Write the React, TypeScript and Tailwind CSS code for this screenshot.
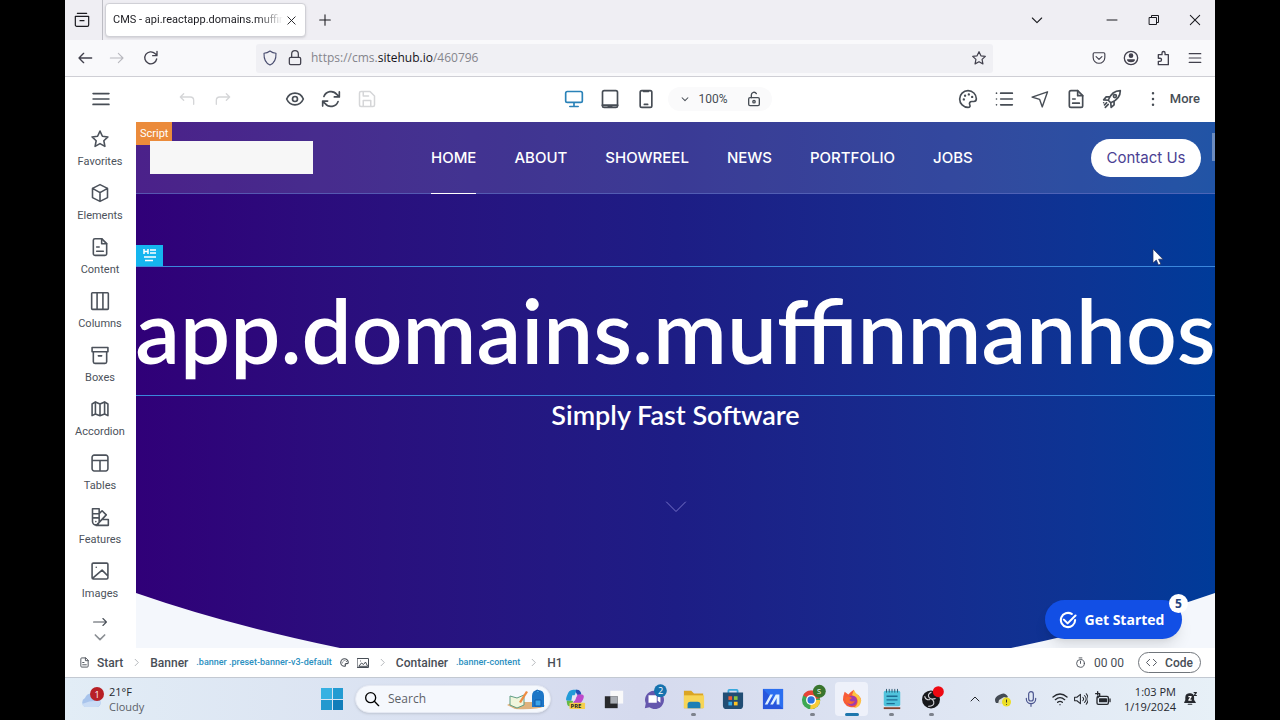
import type { ReactNode } from 'react';

type IconProps = { children: ReactNode; className?: string; width?: number };

function Icon({ children, className = 'size-5', width = 2 }: IconProps) {
  return (
    <svg viewBox="0 0 24 24" fill="none" stroke="currentColor" strokeWidth={width} strokeLinecap="round" strokeLinejoin="round" className={`shrink-0 ${className}`} aria-hidden="true">
      {children}
    </svg>
  );
}

function IconButton({ label, children, className = 'w-8' }: { label: string; children: ReactNode; className?: string }) {
  return (
    <button type="button" aria-label={label} className={`flex h-8 shrink-0 items-center justify-center ${className}`}>
      {children}
    </button>
  );
}

const starPath = <path d="M12 2.500l2.900 6.200 6.600.8-4.900 4.600 1.300 6.700-5.900-3.300-5.900 3.300 1.300-6.700L2.500 9.500l6.600-.8z" />;
const docPath = (
  <>
    <path d="M14 2H6a2 2 0 0 0-2 2v16a2 2 0 0 0 2 2h12a2 2 0 0 0 2-2V8z" />
    <path d="M14 2v6h6M8 12h3M8 17h8" />
  </>
);
const palettePath = (
  <>
    <path d="M12 2a10 10 0 1 0 0 20c2.400 0 2.900-1.500 2.100-3.100-.9-1.900.2-3.900 2.400-3.900H19c2 0 3-1.200 3-3.200C22 6.200 17.500 2 12 2z" />
    <path d="M7 12.500v.01M8.500 8v.01M13 6.500v.01M17 9.500v.01" strokeWidth="2.800" />
  </>
);
const chevronDown = <path d="M5 9l7 7 7-7" />;

function TabBar() {
  return (
    <div className="flex h-10 shrink-0 items-center bg-[#efeef3] text-[#1b1b20]">
      <div className="flex h-full w-[38px] items-center justify-center border-r border-[#bdbdc4] pr-1">
        <IconButton label="Recent browsing">
          <Icon className="size-4" width={1.800}><path d="M5 2h14M2 6.500h20v13a2 2 0 0 1-2 2H4a2 2 0 0 1-2-2zM9 13h6" /></Icon>
        </IconButton>
      </div>
      <div className="ml-[2px] flex h-[34px] w-[201px] items-center rounded-[4px] border border-[#d0d0d6] bg-white pr-[6px] pl-[7px] shadow-sm">
        <span className="min-w-0 flex-1 font-[Roboto,sans-serif] text-[11px] whitespace-nowrap [mask-image:linear-gradient(to_right,black_85%,transparent)]">CMS - api.reactapp.domains.muffin</span>
        <IconButton label="Close tab" className="w-4"><Icon className="size-[11px]"><path d="M4 4l16 16M20 4L4 20" /></Icon></IconButton>
      </div>
      <IconButton label="New tab" className="ml-[3px] w-8"><Icon className="size-4" width={1.600}><path d="M12 4v16M4 12h16" /></Icon></IconButton>
      <IconButton label="List all tabs" className="mr-[34px] ml-auto w-10"><Icon className="size-4" width={1.600}>{chevronDown}</Icon></IconButton>
      <IconButton label="Minimize" className="w-[42px]"><Icon className="size-3"><path d="M2 12h20" /></Icon></IconButton>
      <IconButton label="Restore" className="w-[42px]"><Icon className="size-3"><path d="M3 7h14v14H3zM7 7V3h14v14h-4" /></Icon></IconButton>
      <IconButton label="Close window" className="w-[40px]"><Icon className="size-[14px]" width={1.800}><path d="M4 4l16 16M20 4L4 20" /></Icon></IconButton>
    </div>
  );
}

function AddressBar() {
  return (
    <div className="flex h-[37px] shrink-0 items-center border-b border-[#cfcfd5] bg-[#f9f9fb] px-1 text-[#42414d]">
      <IconButton label="Back"><Icon className="size-4"><path d="M22 12H3M10 5l-7 7 7 7" /></Icon></IconButton>
      <IconButton label="Forward"><Icon className="size-4 text-[#b8b8be]" width={1.600}><path d="M2 12h19M14 5l7 7-7 7" /></Icon></IconButton>
      <IconButton label="Reload" className="w-9"><Icon className="size-4"><path d="M20.500 13.500A9 9 0 1 1 18 5.300L21 8M21 2v6.500h-6.500" /></Icon></IconButton>
      <div className="mr-[90px] ml-[87px] flex h-[29px] min-w-0 flex-1 items-center rounded-[3px] bg-[#f0f0f4] pr-1 pl-[6px]">
        <Icon className="size-4 text-[#4a4e70]" width={1.700}><path d="M12 1.500c3 2.300 6 3.200 9 3.300C21.300 13 19 19.500 12 22.500 5 19.500 2.700 13 3 4.800c3-.1 6-1 9-3.300z" /></Icon>
        <Icon className="ml-[9px] size-4" width={1.900}><path d="M5.500 11h13a2 2 0 0 1 2 2v7a2 2 0 0 1-2 2h-13a2 2 0 0 1-2-2v-7a2 2 0 0 1 2-2zM7 11V6a5 5 0 0 1 10 0v5" /></Icon>
        <a href="https://cms.sitehub.io/460796" className="ml-2 flex-1 font-['Open_Sans',sans-serif] text-[12px] text-[#85858c]">
          https://cms.<span className="text-[#15141a]">sitehub.io</span>/460796
        </a>
        <IconButton label="Bookmark" className="w-5"><Icon className="size-4" width={1.800}>{starPath}</Icon></IconButton>
      </div>
      <IconButton label="Save to Pocket"><Icon className="size-[14px]"><path d="M4 3h16a2 2 0 0 1 2 2v6a10 10 0 0 1-20 0V5a2 2 0 0 1 2-2zM7 9.500l5 5 5-5" /></Icon></IconButton>
      <IconButton label="Account"><Icon className="size-4"><circle cx="12" cy="12" r="10" /><circle cx="12" cy="8.500" r="2.500" fill="currentColor" /><path d="M7 15h10c-1 3-9 3-10 0z" fill="currentColor" /></Icon></IconButton>
      <IconButton label="Extensions"><Icon className="size-4"><path d="M8 7h2.500V4.500a2.300 2.300 0 0 1 4.600 0V7H20v15H5v-5h2.500a2.300 2.300 0 0 0 0-4.600H5V7h3" /></Icon></IconButton>
      <IconButton label="Application menu"><Icon className="size-[14px]" width={1.800}><path d="M2 4.500h20M2 12h20M2 19.500h20" /></Icon></IconButton>
    </div>
  );
}

function CmsToolbar() {
  return (
    <div className="flex h-[45px] shrink-0 items-center justify-between bg-white pb-[2px] text-[#474d55]">
      <div className="flex items-center pl-[18px]">
        <IconButton label="Menu" className="mr-[50px] w-9"><Icon><path d="M2.500 5.500h19M2.500 12h19M2.500 18.500h19" /></Icon></IconButton>
        <IconButton label="Undo" className="w-9 text-[#d5d6d8]"><Icon className="size-4"><path d="M7 4L2 9l5 5M2 9h15a5 5 0 0 1 5 5v6" /></Icon></IconButton>
        <IconButton label="Redo" className="mr-9 w-9 text-[#d5d6d8]"><Icon className="size-4"><path d="M17 4l5 5-5 5M22 9H7a5 5 0 0 0-5 5v6" /></Icon></IconButton>
        <IconButton label="Preview" className="w-9"><Icon className="size-5"><path d="M2 12c2-4.500 5.700-7 10-7s8 2.500 10 7c-2 4.500-5.700 7-10 7s-8-2.500-10-7z" /><circle cx="12" cy="12" r="3" /></Icon></IconButton>
        <IconButton label="Refresh" className="w-9"><Icon className="size-5"><path d="M3.500 9A9 9 0 0 1 19 6.500L21.500 9M22 3.500V9.500h-6M20.500 15A9 9 0 0 1 5 17.500L2.500 15M2 20.500v-6h6" /></Icon></IconButton>
        <IconButton label="Save" className="w-9 text-[#d5d6d8]"><Icon className="size-[18px]"><path d="M4 2h12l6 6v12a2 2 0 0 1-2 2H4a2 2 0 0 1-2-2V4a2 2 0 0 1 2-2zM7 2v6h7M7 22v-8h10v8" /></Icon></IconButton>
      </div>
      <div className="mr-[6px] flex items-center">
        <IconButton label="Desktop" className="w-9 text-[#2a82b8]"><Icon><path d="M4 3h16a2 2 0 0 1 2 2v9a2 2 0 0 1-2 2H4a2 2 0 0 1-2-2V5a2 2 0 0 1 2-2zM12 16v5M7 21h10" /></Icon></IconButton>
        <IconButton label="Tablet" className="w-9"><Icon><rect x="3" y="2" width="18" height="20" rx="2" /><path d="M3 19.500h18M10 20.500h4" strokeWidth="2.500" /></Icon></IconButton>
        <IconButton label="Phone" className="w-9"><Icon><rect x="5" y="2" width="14" height="20" rx="2" /><path d="M9 3h6M10 18.500h4" /></Icon></IconButton>
        <div className="ml-1 flex h-6 w-[104px] items-center rounded-xl bg-[#fafafb]">
          <button type="button" className="flex items-center gap-2 pl-3 font-[Roboto,sans-serif] text-[12px]">
            <Icon className="size-[10px]" width={2.500}>{chevronDown}</Icon>100%
          </button>
          <IconButton label="Unlock zoom" className="ml-auto w-9"><Icon className="size-4"><rect x="4" y="10" width="16" height="12" rx="2" /><path d="M8 10V6a4 4 0 0 1 7.500-2" /><circle cx="12" cy="16" r="1.800" /></Icon></IconButton>
        </div>
      </div>
      <div className="flex items-center pr-[15px]">
        <IconButton label="Design" className="w-9"><Icon>{palettePath}</Icon></IconButton>
        <IconButton label="Structure" className="w-9"><Icon><path d="M8 5h14M8 12h14M8 19h14M3 5h.01M3 12h.01M3 19h.01" /></Icon></IconButton>
        <IconButton label="Navigate" className="w-9"><Icon className="size-[18px]"><path d="M22 2.500L1.500 9.500l10 3 3.500 10z" /></Icon></IconButton>
        <IconButton label="Pages" className="w-9"><Icon>{docPath}</Icon></IconButton>
        <IconButton label="Publish" className="w-9"><Icon><path d="M7.500 13.500C10 7 14.500 2 22 2c0 7.500-5 12-11.500 14.500zM9.500 9.500H5L2 13l5.500.5M14.500 14.500V19L11 22l-.5-5.500" /><circle cx="15.500" cy="8.500" r="1.800" /><path d="M5.500 16.500L3 19M7.500 18.500L4 22M2 16.500v.01" /></Icon></IconButton>
        <button type="button" className="ml-[13px] flex h-8 items-center gap-[7px] font-[Roboto,sans-serif] text-[13px] font-medium">
          <Icon width={3}><path d="M12 5v.01M12 12v.01M12 19v.01" /></Icon>More
        </button>
      </div>
    </div>
  );
}

const tools: { label: string; icon: ReactNode }[] = [
  { label: 'Favorites', icon: starPath },
  { label: 'Elements', icon: <path d="M12 2l9 4.500v11L12 22l-9-4.500v-11zM3 6.500l9 5 9-5M12 11.500V22" /> },
  { label: 'Content', icon: docPath },
  { label: 'Columns', icon: <path d="M3 2h18a1 1 0 0 1 1 1v18a1 1 0 0 1-1 1H3a1 1 0 0 1-1-1V3a1 1 0 0 1 1-1zM8.500 2v20M15.500 2v20" /> },
  { label: 'Boxes', icon: <path d="M2.500 3h19v5h-19zM4 8v12a2 2 0 0 0 2 2h12a2 2 0 0 0 2-2V8M10 13h4" /> },
  { label: 'Accordion', icon: <path d="M2.500 6l4-2.500 5.500 2.500 5.500-2.500 4 2.500v14l-4-2-5.500 2-5.500-2-4 2zM6.500 3.500V18M12 6v14M17.500 3.500V18" /> },
  { label: 'Tables', icon: <path d="M5 2.500h14a2.500 2.500 0 0 1 2.500 2.500v14a2.500 2.500 0 0 1-2.500 2.500H5A2.500 2.500 0 0 1 2.500 19V5A2.500 2.500 0 0 1 5 2.500zM2.500 9h19M12 9v12.500" /> },
  { label: 'Features', icon: <path d="M3 2h8v15.500a4 4 0 0 1-8 0zM3 8h8M3 13h8M11 8l3.500-3.500 5 5L9 20.500M15 15h7v7H7M7 17.500v.01" /> },
  { label: 'Images', icon: <path d="M4 2.500h16A1.500 1.500 0 0 1 21.500 4v16a1.500 1.500 0 0 1-1.500 1.500H4A1.500 1.500 0 0 1 2.500 20V4A1.500 1.500 0 0 1 4 2.500zM4 20l10.500-9 7 7M7.500 7.500v.01" /> },
];

function Sidebar() {
  return (
    <nav aria-label="Blocks" className="flex w-[71px] shrink-0 flex-col items-center bg-white pt-[7px] pr-px text-[#4c525b]">
      {tools.map((tool) => (
        <button key={tool.label} type="button" className="flex h-[54px] w-full shrink-0 flex-col items-center gap-[5px] font-[Roboto,sans-serif] text-[11px] leading-4">
          <Icon className="size-5" width={1.900}>{tool.icon}</Icon>
          {tool.label}
        </button>
      ))}
      <Icon className="h-[14px] w-5"><path d="M1 12h22M17 6l6 6-6 6" /></Icon>
      <Icon className="size-4 text-[#8b8f94]" width={2.500}>{chevronDown}</Icon>
    </nav>
  );
}

const links = ['HOME', 'ABOUT', 'SHOWREEL', 'NEWS', 'PORTFOLIO', 'JOBS'];

function SiteCanvas() {
  return (
    <main className="relative flex min-w-0 flex-1 flex-col overflow-hidden bg-linear-to-r from-[#300078] via-[#1d1d85] to-[#003b99] text-white">
      <header className="flex h-[72px] shrink-0 items-center border-b border-[#5c6cc0]/70 bg-white/13 px-[14px]">
        <span className="absolute top-0 left-0 bg-[#eb8b3b] px-1 font-[Roboto,sans-serif] text-[11px] leading-[23px]">Script</span>
        <div className="relative h-[33px] w-[163px] shrink-0 bg-[#f7f7f7]" />
        <ul className="ml-[118px] flex h-full gap-[38px] font-[Inter,sans-serif] text-[15px] font-medium">
          {links.map((link) => (
            <li key={link} className={link === 'HOME' ? 'flex h-[72px] items-center border-y border-t-transparent border-b-white' : 'flex h-[72px] items-center'}>
              <a href="#top">{link}</a>
            </li>
          ))}
        </ul>
        <a href="#contact" className="ml-auto flex h-[38px] w-[110px] shrink-0 items-center justify-center rounded-full bg-white pt-px font-[Inter,sans-serif] text-[15px] whitespace-nowrap text-[#4b3f93]">Contact Us</a>
      </header>
      <div className="absolute top-[11px] right-0 h-7 w-[3px] bg-[#6c8cc0]" />
      <div className="mt-[51px] flex h-[21px] w-[27px] shrink-0 items-center justify-center bg-[#15b5ef]">
        <svg viewBox="0 0 14 13" className="h-[13px] w-[14px]" fill="none" stroke="white" aria-hidden="true">
          <path d="M1 0v5M5 0v5M1 2.500h4M7 1h6M7 4h6M1 8h12M2 11.500h8" strokeWidth="1.500" />
        </svg>
      </div>
      <h1 className="flex h-[130px] shrink-0 items-center justify-center border-y border-[#3b87dc] pb-[3px] font-[Lato,sans-serif] text-[89px] leading-none font-semibold whitespace-nowrap">app.domains.muffinmanhos</h1>
      <p className="mt-[3px] text-center font-[Lato,sans-serif] text-[27px] leading-8 font-semibold">Simply Fast Software</p>
      <Icon className="mx-auto mt-[64px] size-6 text-[#7772c8]" width={1}><path d="M2.500 7l9.500 9.500L21.500 7" /></Icon>
      <svg viewBox="0 0 1079 55" preserveAspectRatio="none" className="mt-auto h-[55px] w-full shrink-0" fill="#f4f7fc" aria-hidden="true">
        <path d="M0 0Q92 32 204 55H0zM1079 0Q987 32 875 55H1079z" />
      </svg>
      <svg viewBox="0 0 12 18" className="absolute top-[126px] right-[51px] h-[18px] w-3" aria-hidden="true">
        <path d="M1 1v14l3.300-3 2.200 5 2.300-1-2.200-4.800H11z" fill="white" stroke="#24305f" strokeWidth=".7" />
      </svg>
      <button type="button" className="absolute right-[33px] bottom-[9px] flex h-[39px] w-[137px] items-center justify-center gap-2 rounded-full bg-[#124fe5] pr-1 font-['Open_Sans',sans-serif] text-[14px] font-bold shadow-lg">
        <Icon className="size-[18px]" width={2.800}><path d="M21.500 12A9.500 9.500 0 1 1 17 3.900M6.500 11.500l5 5L22 6" /></Icon>
        Get Started
        <span className="absolute -top-[6px] -right-[6px] flex size-[19px] items-center justify-center rounded-full bg-white text-[12px] text-[#27447f]">5</span>
      </button>
    </main>
  );
}

function Crumb({ label, classes }: { label: string; classes?: string }) {
  return (
    <a href={`#${label.toLowerCase()}`} className="flex items-center gap-2">
      <span>{label}</span>
      {classes && <span className="text-[9px] text-[#2b8fc1]">{classes}</span>}
    </a>
  );
}

function CrumbArrow() {
  return <Icon className="mx-2 size-[11px] text-[#b0b4b8]"><path d="M9 5l7 7-7 7" /></Icon>;
}

function Breadcrumbs() {
  return (
    <div className="flex h-[30px] shrink-0 items-center border-b border-[#c3c9d2] bg-white px-[14px] font-[Roboto,sans-serif] text-[12px] font-medium text-[#484e56]">
      <Icon className="mr-[7px] size-[11px]">{docPath}</Icon>
      <Crumb label="Start" />
      <CrumbArrow />
      <Crumb label="Banner" classes=".banner .preset-banner-v3-default" />
      <Icon className="ml-2 size-[9px]" width={3}>{palettePath}</Icon>
      <Icon className="ml-2 size-3"><path d="M1 3h22v18H1zM4 18l5-6 4 3 4-5 4 8zM7 8v.01" /></Icon>
      <CrumbArrow />
      <Crumb label="Container" classes=".banner-content" />
      <CrumbArrow />
      <Crumb label="H1" />
      <Icon className="mr-2 ml-auto size-[11px]"><circle cx="12" cy="14" r="8.500" /><path d="M12 9v5M9 2h6" /></Icon>
      <span className="mr-[14px] font-normal">00 00</span>
      <button type="button" className="flex h-[21px] w-[63px] items-center justify-center gap-2 rounded-full border border-[#70757b]">
        <Icon className="size-[11px]"><path d="M8 5l-7 7 7 7M16 5l7 7-7 7" /></Icon>Code
      </button>
    </div>
  );
}

function TaskbarApps() {
  const apps: { name: string; art: ReactNode; state?: 'open' | 'active' }[] = [
    { name: 'Copilot', art: <>
      <path d="M3 9q2-7 7-7h4l-5 12H4q-3 0-1-5z" fill="#239bd8" /><path d="M13 2q5-1 6 5l-4 1-2-3z" fill="#244fb8" /><path d="M15 7h4q4 0 2 5t-6 6H9z" fill="#bd49cb" /><path d="M3 14h7l-2 6H6q-3 0-3-6z" fill="#64b946" /><path d="M9 8h5l-2 6H8z" fill="#e9e6f4" />
      <rect x="6" y="16" width="17" height="7" rx="1" fill="#f6cf4b" /><text x="7" y="22" fontSize="6.500" fontWeight="700" fill="#222" fontFamily="Open Sans">PRE</text></> },
    { name: 'Task view', art: <><path d="M8 3h14v14H8z" fill="#f9f9fa" /><path d="M2 9h14v13H2z" fill="#28292c" /><path d="M8 9h8v8H8z" fill="#aaaeb5" /></> },
    { name: 'Chat', art: <><path d="M12 3a10 10 0 1 1-5 18l-5 1 1-5A10 10 0 0 1 12 3z" fill="#6557ad" /><path d="M6 8h9v8H6zM16 10l3-2v8l-3-2z" fill="#fff" /><circle cx="19" cy="3" r="7" fill="#1672ae" /><text x="16.300" y="6.500" fontSize="10" fill="#fff" fontFamily="Open Sans">2</text></> },
    { name: 'Files', state: 'open', art: <><path d="M1 3h8l3 3h10v16H1z" fill="#dba524" /><path d="M1 8h22v14H1z" fill="#f7d557" /><path d="M5 22v-4q0-3 3-3h8q3 0 3 3v4z" fill="#1b7fb5" /></> },
    { name: 'Store', art: <><path d="M7 7V3q0-1 1-1h8q1 0 1 1v4" fill="none" stroke="#38a8dd" strokeWidth="2" /><path d="M1 5h22v14q0 4-4 4H5q-4 0-4-4z" fill="#214d74" /><path d="M7 9h4v4H7z" fill="#f15b32" /><path d="M13 9h4v4h-4z" fill="#8ac63f" /><path d="M7 15h4v4H7z" fill="#32a8e8" /><path d="M13 15h4v4h-4z" fill="#ffc321" /></> },
    { name: 'MyASUS', art: <><path d="M1 1h22v22H1z" fill="#2856dc" /><path d="M12 1h11v22L1 1z" fill="#2b6ff0" /><path d="M3 18L9 7h3L6 18zM9 18l6-11h4v11h-3v-7l-4 7z" fill="#dff1ff" /></> },
    { name: 'Chrome', state: 'open', art: <><circle cx="11" cy="13" r="10" fill="#3da853" /><path d="M11 13L2.300 8A10 10 0 0 1 21 11z" fill="#e84336" /><path d="M11 13h10a10 10 0 0 1-11 10z" fill="#f8cb38" /><circle cx="11" cy="13" r="5.500" fill="#fff" /><circle cx="11" cy="13" r="4" fill="#2e73dd" /><circle cx="20" cy="3.500" r="7" fill="#39752e" /><text x="17.500" y="6.500" fontSize="8" fill="#fff" fontFamily="Open Sans">S</text></> },
    { name: 'Firefox', state: 'active', art: <><path d="M2.500 9L4 4l4 3q3-3 6-5 0 4 5 6 3 3 3 6a10 9.500 0 1 1-19.500-5z" fill="#f75b39" /><path d="M14 2q1 3 5 6 3 3 3 6-1 8-8 8 5-4 4-9-1-4-6-5z" fill="#fec342" /><circle cx="12" cy="14" r="5.500" fill="#a23bac" /><path d="M5 10q5-2 7 1l-3 2q3 3 6 1-2 5-7 3-4-2-3-7z" fill="#f9682f" /></> },
    { name: 'Notepad', state: 'open', art: <><rect x="3" y="3" width="18" height="17" rx="2" fill="#50c3dc" /><path d="M6 1v4M9 1v4M12 1v4M15 1v4M18 1v4" stroke="#28576e" /><path d="M6 9h12M6 13h12M6 17h9" stroke="#1c6d92" strokeWidth="1.500" /><path d="M3 21h18v2H3z" fill="#85432c" /></> },
    { name: 'OBS', state: 'open', art: <><circle cx="12" cy="12.500" r="9.800" fill="#17181b" /><path d="M12.500 4.500q-5 2-2.500 6 2 2.500 7 1M5 9q1.500 5 6 3.500M9 20q7 0 6-5-1-3-3.500-3" fill="none" stroke="#d5d5da" strokeWidth="1.200" /><circle cx="20" cy="4" r="6" fill="#ee0912" /></> },
  ];
  return (
    <div className="ml-1 grid w-[396px] shrink-0 grid-cols-10 justify-items-center">
      {apps.map((app) => (
        <button key={app.name} type="button" aria-label={app.name} className={app.state === 'active' ? 'flex h-[34px] w-[33px] flex-col items-center justify-end rounded-[4px] bg-[#eef1fa]' : 'flex h-[34px] w-[33px] flex-col items-center justify-end'}>
          <svg viewBox="0 0 24 24" className="size-[22px] overflow-visible" aria-hidden="true">{app.art}</svg>
          <span className={app.state === 'active' ? 'mt-[3px] h-[3px] w-[14px] rounded-full bg-[#1e77ad]' : app.state === 'open' ? 'mt-[3px] h-[3px] w-[5px] rounded-full bg-[#7d828c]' : 'mt-[3px] h-[3px]'} />
        </button>
      ))}
    </div>
  );
}

function Taskbar() {
  return (
    <footer className="flex h-[42px] shrink-0 items-center bg-linear-to-r from-[#e2edf6] via-[#d5daee] to-[#e7f0f7] font-['Open_Sans',sans-serif] text-[11px] text-[#25282e]">
      <div className="flex w-[256px] items-center pl-[15px]">
        <svg viewBox="0 0 25 24" className="h-6 w-[25px]" aria-hidden="true">
          <path d="M5 20a5 5 0 0 1 0-9 7 7 0 0 1 13 0 5 5 0 0 1 0 9z" fill="#a8c4ec" />
          <path d="M2 17q9-4 19-3-1 6-5 6H5q-2 0-3-3z" fill="#c9dcf5" />
          <circle cx="17" cy="7" r="7" fill="#b82026" /><text x="14.500" y="10.500" fontSize="9" fill="white" fontFamily="Open Sans">1</text>
        </svg>
        <div className="ml-1 leading-[15px]">
          <div>21°F</div>
          <div className="text-[#5c6168]">Cloudy</div>
        </div>
      </div>
      <button type="button" aria-label="Start" className="mr-3 grid size-[22px] shrink-0 grid-cols-2 gap-px">
        <span className="bg-[#38b1e2]" /><span className="bg-[#239bd2]" /><span className="bg-[#2399cf]" /><span className="bg-[#117dba]" />
      </button>
      <label className="flex h-7 w-[196px] shrink-0 items-center rounded-full border border-[#e5e9f3] bg-[#f5f8fd] pr-1 pl-2 shadow-sm">
        <Icon className="size-4 text-black"><circle cx="10" cy="10" r="7.500" /><path d="M15.500 15.500L22 22" /></Icon>
        <input type="text" placeholder="Search" aria-label="Search" className="ml-2 w-0 min-w-0 flex-1 bg-transparent text-[12px] outline-none placeholder:text-[#5d6168]" />
        <svg viewBox="0 0 39 22" className="h-[22px] w-[39px]" aria-hidden="true">
          <path d="M0 17l6-3h28l4 4q-8 4-30 3z" fill="#dfb27d" />
          <path d="M3 8l7 2 7-3v10l-7 3-7-3z" fill="#f0f5dc" stroke="#5f9d83" />
          <path d="M12 14l7-11 2 1-7 11z" fill="#ed8b43" />
          <path d="M25 8q0-6 6-6t6 6v11H25z" fill="#1c76c7" /><path d="M28 12h6v6h-6zM29 4q0-4 4 0" fill="#3ca4e9" stroke="#115aab" />
        </svg>
      </label>
      <TaskbarApps />
      <div className="ml-auto flex items-center pr-[17px]">
        <IconButton label="Show hidden icons" className="w-7"><Icon className="size-3"><path d="M4 16l8-8 8 8" /></Icon></IconButton>
        <IconButton label="Cloud sync" className="w-7">
          <svg viewBox="0 0 18 16" className="h-4 w-[18px]" aria-hidden="true"><path d="M2 12q-3-5 3-8 6-4 9 2L6 12z" fill="#444b54" /><path d="M5 9l5-3 6 2v5H4z" fill="#d9ddd9" /><circle cx="12.500" cy="11" r="4.500" fill="#ecdf24" /><path d="M12.500 8.500v3M12.500 13v.8" stroke="#333" /></svg>
        </IconButton>
        <IconButton label="Microphone" className="w-7"><Icon className="size-4 text-[#4c5690]" width={1.800}><rect x="8.500" y="1" width="7" height="14" rx="3.500" /><path d="M5 11v1a7 7 0 0 0 14 0v-1M12 19v4" /></Icon></IconButton>
        <IconButton label="Wi-Fi" className="ml-1 w-[22px]"><Icon className="size-4"><path d="M1.500 9q10.500-9 21 0M5 13q7-6 14 0M8.500 17q3.500-3 7 0M12 20.500v.01" /></Icon></IconButton>
        <IconButton label="Volume" className="w-5"><Icon className="size-[14px]" width={1.800}><path d="M1 9h4l6-5v16l-6-5H1zM15 9q3 3 0 6M18 6q6 6 0 12M21 3q7 9 0 18" /></Icon></IconButton>
        <IconButton label="Battery" className="w-6"><Icon className="size-4"><rect x="3" y="8" width="17" height="12" rx="2" /><path d="M7 12h10v4H7z" fill="currentColor" /><path d="M22.500 12v4M4 1v5M1 4h6v3L4 10" /></Icon></IconButton>
        <div className="ml-[5px] w-[56px] text-right leading-[15px]">
          <div>1:03 PM</div>
          <div>1/19/2024</div>
        </div>
        <IconButton label="Notifications" className="ml-[6px] w-4"><Icon className="size-[14px]"><path d="M3 18l2-4V9q0-6 7-6 6 0 6 6v5l3 4zM9 21h6" fill="currentColor" /><path d="M10 8h4l-4 6h4" stroke="white" /><path d="M19 1h4l-4 5h4" /></Icon></IconButton>
      </div>
    </footer>
  );
}

export default function App() {
  return (
    <div className="flex min-h-screen flex-col bg-black px-[65px]">
      <TabBar />
      <AddressBar />
      <CmsToolbar />
      <div className="flex flex-1">
        <Sidebar />
        <SiteCanvas />
      </div>
      <Breadcrumbs />
      <Taskbar />
    </div>
  );
}
